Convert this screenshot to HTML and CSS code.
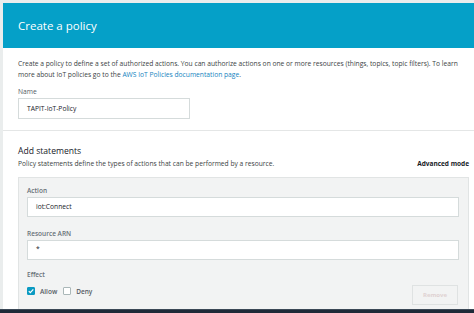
FILE: index.html
```html
<!DOCTYPE html>
<html>
<head>
<meta charset="utf-8">
<link rel="stylesheet" href="styles.css">
</head>
<body>
<div class="page">
  <header class="header">
    <h1 class="title">Create a policy</h1>
  </header>
  <section class="panel intro-panel">
    <p class="intro">Create a policy to define a set of authorized actions. You can authorize actions on one or more resources (things, topics, topic filters). To learn more about IoT policies go to the <a class="link" href="#">AWS IoT Policies documentation page</a>.</p>
    <label class="label name-label">Name</label>
    <div class="input name-input">TAPIT-IoT-Policy</div>
  </section>
  <section class="panel statements-panel">
    <h2 class="subtitle">Add statements</h2>
    <div class="desc-row">
      <span class="desc">Policy statements define the types of actions that can be performed by a resource.</span>
      <span class="advanced">Advanced mode</span>
    </div>
    <div class="statement">
      <label class="field-label first">Action</label>
      <div class="input wide">iot:Connect</div>
      <label class="field-label">Resource ARN</label>
      <div class="input wide">*</div>
      <label class="field-label effect-label">Effect</label>
      <div class="effect-row">
        <div class="checks">
          <span class="check checked"><svg viewBox="0 0 8 8" width="8" height="8"><path d="M1.8 4.2 L3.3 5.7 L6.3 2.4" fill="none" stroke="#fff" stroke-width="1.2"/></svg></span>
          <span class="check-text">Allow</span>
          <span class="check"></span>
          <span class="check-text">Deny</span>
        </div>
        <button class="remove">Remove</button>
      </div>
    </div>
  </section>
</div>
<div class="taskbar"></div>
</body>
</html>
```
FILE: styles.css
```css
html, body {
  margin: 0;
  padding: 0;
}
body {
  background: #eaeded;
  font-family: "Open Sans", "Noto Sans", sans-serif;
  overflow: hidden;
  height: 313px;
}
.page {
  margin: 3px 0 0 3px;
  width: 481px;
}
.header {
  height: 45px;
  background: #05a0c8;
  display: flex;
  align-items: center;
  padding-left: 15px;
}
.title {
  margin: 0;
  color: #fff;
  font-size: 11.5px;
  font-weight: 400;
  line-height: 14px;
}
.panel {
  background: #fff;
  padding: 0 15px;
}
.intro-panel {
  padding-top: 10px;
  padding-bottom: 11px;
  border-bottom: 1px solid #e4e6e6;
}
.intro {
  margin: 0;
  font-size: 6.7px;
  line-height: 11px;
  color: #3b3f44;
  width: 445px;
}
.link {
  color: #1584c0;
  text-decoration: none;
}
.label {
  display: block;
  margin-top: 7px;
  font-size: 6.7px;
  line-height: 10px;
  color: #545b64;
}
.input {
  box-sizing: border-box;
  height: 21px;
  margin-top: 1px;
  background: #fff;
  border: 1px solid #d5dbdb;
  font-size: 6.7px;
  line-height: 19px;
  color: #16191f;
  padding-left: 8px;
}
.name-input {
  width: 172px;
}
.statements-panel {
  padding-top: 14px;
  height: 180px;
}
.subtitle {
  margin: 0;
  font-size: 8.6px;
  line-height: 12px;
  font-weight: 400;
  color: #16191f;
}
.desc-row {
  display: flex;
  justify-content: space-between;
  align-items: center;
  margin-top: 2px;
  width: 451px;
}
.desc {
  font-size: 6.7px;
  line-height: 10px;
  color: #3b3f44;
}
.advanced {
  font-size: 6.5px;
  line-height: 10px;
  font-weight: 700;
  color: #16191f;
}
.statement {
  box-sizing: border-box;
  width: 451px;
  margin-top: 8px;
  background: #f2f3f3;
  border: 1px solid #e1e4e4;
  padding: 8px 9px 10px 8px;
}
.field-label {
  display: block;
  margin-top: 12px;
  font-size: 6.5px;
  line-height: 10px;
  font-weight: 600;
  color: #687078;
}
.field-label.first {
  margin-top: 0;
}
.effect-label {
  margin-top: 10px;
}
.wide {
  height: 20px;
  line-height: 18px;
  padding-left: 8px;
}
.effect-row {
  display: flex;
  justify-content: space-between;
  align-items: flex-start;
  margin-top: 5px;
}
.checks {
  display: flex;
  align-items: center;
  height: 12px;
}
.check {
  box-sizing: border-box;
  width: 8px;
  height: 8px;
  border: 1px solid #aab7b8;
  background: #fff;
  border-radius: 1px;
  display: flex;
}
.check.checked {
  background: #0a9ac2;
  border-color: #0a9ac2;
}
.check.checked svg {
  margin: -1px;
}
.check-text {
  font-size: 6.5px;
  font-weight: 600;
  color: #545b64;
  margin: 0 6px 0 5px;
}
.remove {
  box-sizing: border-box;
  width: 46px;
  height: 20px;
  margin: 0 1px 0 0;
  background: #f2f3f3;
  border: 1px solid #dfe2e2;
  font-family: inherit;
  font-size: 6px;
  font-weight: 700;
  color: #dfd2d2;
  padding: 0;
}
.taskbar {
  position: fixed;
  left: 0;
  right: 0;
  bottom: 0;
  height: 4px;
  background: #1e2a38;
  border-top: 1px solid #3b4856;
  box-sizing: border-box;
}
```
